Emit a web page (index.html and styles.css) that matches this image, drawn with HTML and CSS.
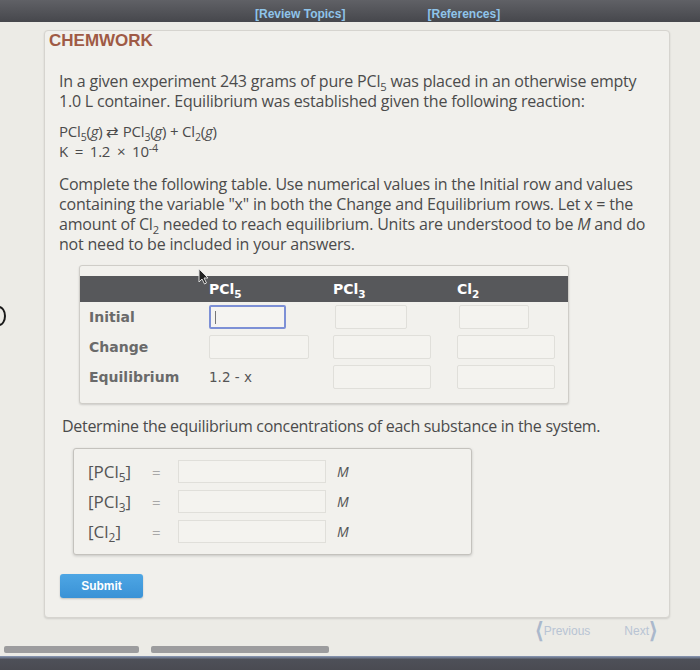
FILE: index.html
```html
<!DOCTYPE html>
<html>
<head>
<meta charset="utf-8">
<link rel="stylesheet" href="styles.css">
</head>
<body>
<div class="topbar">
  <a class="toplink review">[Review Topics]</a>
  <a class="toplink refs">[References]</a>
</div>
<div class="handle"></div>
<div class="main">
  <div class="card">
    <h1 class="title">CHEMWORK</h1>
    <div class="content">
      <p class="para">In a given experiment 243 grams of pure PCl<sub>5</sub> was placed in an otherwise empty 1.0 L container. Equilibrium was established given the following reaction:</p>
      <p class="eq">PCl<sub>5</sub>(<i>g</i>) &#8644; PCl<sub>3</sub>(<i>g</i>) + Cl<sub>2</sub>(<i>g</i>)<br><span class="kline">K = 1.2 &times; 10<sup>-4</sup></span></p>
      <p class="para second">Complete the following table. Use numerical values in the Initial row and values containing the variable "x" in both the Change and Equilibrium rows. Let x = the amount of Cl<sub>2</sub> needed to reach equilibrium. Units are understood to be <i>M</i> and do not need to be included in your answers.</p>

      <div class="ice">
        <div class="ice-head">
          <span class="hcell"></span>
          <span class="hcell">PCl<sub>5</sub></span>
          <span class="hcell">PCl<sub>3</sub></span>
          <span class="hcell">Cl<sub>2</sub></span>
        </div>
        <div class="ice-row">
          <span class="rlabel">Initial</span>
          <span class="cell"><span class="inp focus w76"><span class="caret"></span></span></span>
          <span class="cell"><span class="inp w72"></span></span>
          <span class="cell"><span class="inp w71"></span></span>
        </div>
        <div class="ice-row">
          <span class="rlabel">Change</span>
          <span class="cell"><span class="inp w100"></span></span>
          <span class="cell"><span class="inp w98"></span></span>
          <span class="cell"><span class="inp w98"></span></span>
        </div>
        <div class="ice-row">
          <span class="rlabel">Equilibrium</span>
          <span class="cell val">1.2 - x</span>
          <span class="cell"><span class="inp w98"></span></span>
          <span class="cell"><span class="inp w98"></span></span>
        </div>
        <svg class="cursor" width="14" height="18" viewBox="0 0 14 18"><path d="M1 1 L1 14 L4 11 L6.5 16 L8.5 15 L6 10 L10 10 Z" fill="#222" stroke="#ddd" stroke-width="1"/></svg>
      </div>

      <p class="para det">Determine the equilibrium concentrations of each substance in the system.</p>

      <div class="conc">
        <div class="crow"><span class="clabel">[PCl<sub>5</sub>]</span><span class="ceq">=</span><span class="cinp"></span><span class="cunit">M</span></div>
        <div class="crow"><span class="clabel">[PCl<sub>3</sub>]</span><span class="ceq">=</span><span class="cinp"></span><span class="cunit">M</span></div>
        <div class="crow"><span class="clabel">[Cl<sub>2</sub>]</span><span class="ceq">=</span><span class="cinp"></span><span class="cunit">M</span></div>
      </div>

      <button class="submit">Submit</button>
    </div>
  </div>
  <div class="nav">
    <span class="navbtn"><span class="chev">&#10216;</span>Previous</span>
    <span class="navbtn next">Next<span class="chev">&#10217;</span></span>
  </div>
</div>
<div class="bars">
  <span class="gbar b1"></span>
  <span class="gbar b2"></span>
</div>
<div class="bottombar"></div>
</body>
</html>
```

FILE: styles.css
```css
html, body {
  margin: 0;
  padding: 0;
}
body {
  background: #ecebe6;
  font-family: "Open Sans", "Liberation Sans", sans-serif;
  color: #4b4b4b;
  width: 700px;
  height: 670px;
  overflow: hidden;
  position: relative;
}
.topbar {
  height: 22px;
  background: linear-gradient(#606166, #46474c);
  display: flex;
  align-items: center;
  box-sizing: border-box;
  padding-top: 5px;
}
.toplink {
  font-family: "Liberation Sans", Arial, sans-serif;
  font-weight: bold;
  font-size: 12px;
  color: #8fc4ea;
}
.review { margin-left: 255px; }
.refs { margin-left: 82px; }

.handle {
  position: absolute;
  left: -8px;
  top: 306px;
  width: 10px;
  height: 16px;
  border: 2px solid #1a1a1a;
  border-radius: 50%;
}

.main {
  padding: 8px 0 0 44px;
}
.card {
  width: 626px;
  box-sizing: border-box;
  background: #f1f0ec;
  border: 1px solid #d6d4cf;
  border-radius: 4px;
  box-shadow: 0 1px 2px rgba(0,0,0,0.12);
  padding: 0 0 19px 0;
}
.title {
  margin: 0;
  padding-left: 4px;
  font-family: "Liberation Sans", Arial, sans-serif;
  font-size: 17px;
  font-weight: bold;
  line-height: 20px;
  color: #9f5a45;
}
.content {
  padding: 0 20px 0 14px;
}
.para {
  margin: 21px 0 0 0;
  font-size: 16px;
  line-height: 19.7px;
  letter-spacing: -0.2px;
}
.para sub, .eq sub, .clabel sub {
  font-size: 0.7em;
  vertical-align: -0.35em;
  line-height: 0;
}
.eq {
  margin: 10px 0 0 0;
  font-size: 15px;
  line-height: 20px;
  letter-spacing: -0.2px;
}
.kline {
  word-spacing: 3px;
}
.eq sup {
  font-size: 0.72em;
  vertical-align: 0.5em;
  line-height: 0;
}
.para.second {
  margin-top: 14px;
}

.ice {
  position: relative;
  margin: 11px 0 0 20px;
  width: 490px;
  height: 139px;
  box-sizing: border-box;
  border: 1px solid #cfcdc8;
  border-radius: 3px;
  background: #f2f1ed;
  box-shadow: 0 1px 2px rgba(0,0,0,0.15);
  padding-top: 10px;
}
.ice-head, .ice-row {
  display: grid;
  grid-template-columns: 129px 124px 124px 1fr;
  align-items: center;
}
.ice-head {
  height: 26px;
  background: #57585b;
  color: #fff;
  font-family: "DejaVu Sans", Verdana, sans-serif;
  font-weight: bold;
  font-size: 14px;
}
.hcell sub {
  font-size: 0.75em;
  vertical-align: -0.35em;
  line-height: 0;
}
.ice-row {
  height: 30px;
}
.rlabel {
  padding-left: 9px;
  font-family: "DejaVu Sans", Verdana, sans-serif;
  font-weight: bold;
  font-size: 14px;
  color: #6a6a6a;
}
.cell {
  display: flex;
  align-items: center;
}
.val {
  font-family: "DejaVu Sans", Verdana, sans-serif;
  font-size: 13.5px;
  color: #555;
}
.inp {
  display: block;
  height: 24px;
  box-sizing: border-box;
  border: 1px solid #e0dfda;
  background: #f4f3ef;
  border-radius: 2px;
}
.inp.focus {
  border: 2px solid #7d90d6;
  background: #f5f4f1;
  position: relative;
}
.caret {
  position: absolute;
  left: 4px;
  top: 4px;
  width: 1px;
  height: 13px;
  background: #777;
}
.w76 { width: 77px; }
.w72 { width: 72px; margin-left: 2px; }
.w71 { width: 70px; margin-left: 2px; }
.w100 { width: 100px; }
.w98 { width: 98px; }
.cursor {
  position: absolute;
  left: 118px;
  top: 2px;
}

.para.det {
  margin-top: 13px;
  padding-left: 3px;
  letter-spacing: -0.3px;
}
.conc {
  margin: 11px 0 0 14px;
  width: 399px;
  height: 107px;
  box-sizing: border-box;
  border: 1px solid #c4c2bd;
  border-radius: 3px;
  background: #f2f1ed;
  box-shadow: 0 1px 3px rgba(0,0,0,0.18);
  padding: 8px 0 0 14px;
}
.crow {
  display: flex;
  align-items: center;
  height: 30px;
}
.clabel {
  width: 64px;
  font-size: 17px;
  color: #555;
}
.ceq {
  width: 26px;
  font-size: 15px;
  color: #a8a8a8;
}
.cinp {
  width: 148px;
  height: 23px;
  box-sizing: border-box;
  border: 1px solid #e0dfda;
  background: #f4f3ef;
}
.cunit {
  margin-left: 11px;
  font-style: italic;
  font-size: 14px;
  color: #555;
}
.submit {
  display: block;
  margin: 19px 0 0 1px;
  width: 83px;
  height: 24px;
  border: none;
  border-radius: 3px;
  background: linear-gradient(#4ea6e4, #3a92d6);
  color: #fff;
  font-family: "Liberation Sans", Arial, sans-serif;
  font-weight: bold;
  font-size: 12px;
  box-shadow: 0 1px 2px rgba(0,0,0,0.2);
  padding: 0;
}

.nav {
  display: flex;
  justify-content: flex-end;
  align-items: center;
  width: 626px;
  height: 26px;
  font-family: "Liberation Sans", Arial, sans-serif;
  font-size: 12px;
  color: #b8c4d4;
  box-sizing: border-box;
  padding-right: 12px;
}
.navbtn {
  display: flex;
  align-items: center;
}
.next { margin-left: 34px; }
.chev {
  font-size: 22px;
  color: #aab8cc;
  font-weight: bold;
}
.bars {
  display: flex;
  gap: 12px;
  padding-left: 4px;
  margin-top: 2px;
  height: 7px;
}
.gbar {
  display: block;
  height: 7px;
  background: #9c9c9e;
  border-radius: 2px;
}
.b1 { width: 135px; }
.b2 { width: 178px; }
.bottombar {
  margin-top: 3px;
  height: 14px;
  background: linear-gradient(#8a9ab8, #4e5058 25%, #4a4b52);
}
```
